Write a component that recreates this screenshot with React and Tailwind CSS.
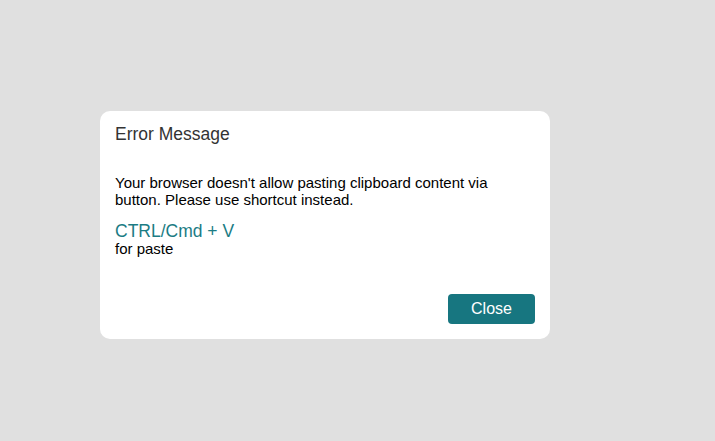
import React from 'react';

const ErrorDialog = () => {
  return (
    <div
      className="flex h-[228px] w-[450px] flex-col rounded-[10px] bg-white px-[15px]"
      style={{ fontFamily: '"Liberation Sans", Arial, sans-serif' }}
    >
      <h2 className="pt-[12px] text-[17.5px] leading-[22px] text-[#333333]">Error Message</h2>
      <p className="mt-[29px] text-[15px] leading-[17px] text-black">
        Your browser doesn't allow pasting clipboard content via
        <br />
        button. Please use shortcut instead.
      </p>
      <p className="mt-[13px] text-[17.5px] leading-[20px] text-[#1b7c84]">CTRL/Cmd + V</p>
      <p className="text-[15px] leading-[15px] text-black">for paste</p>
      <div className="mt-auto flex justify-end pb-[15px]">
        <button className="h-[30px] w-[87px] rounded-[4px] bg-[#177680] text-[16px] text-white">
          Close
        </button>
      </div>
    </div>
  );
};

export default function App() {
  return (
    <div className="min-h-[441px] w-full bg-[#e0e0e0] pl-[100px] pt-[111px]">
      <ErrorDialog />
    </div>
  );
}
